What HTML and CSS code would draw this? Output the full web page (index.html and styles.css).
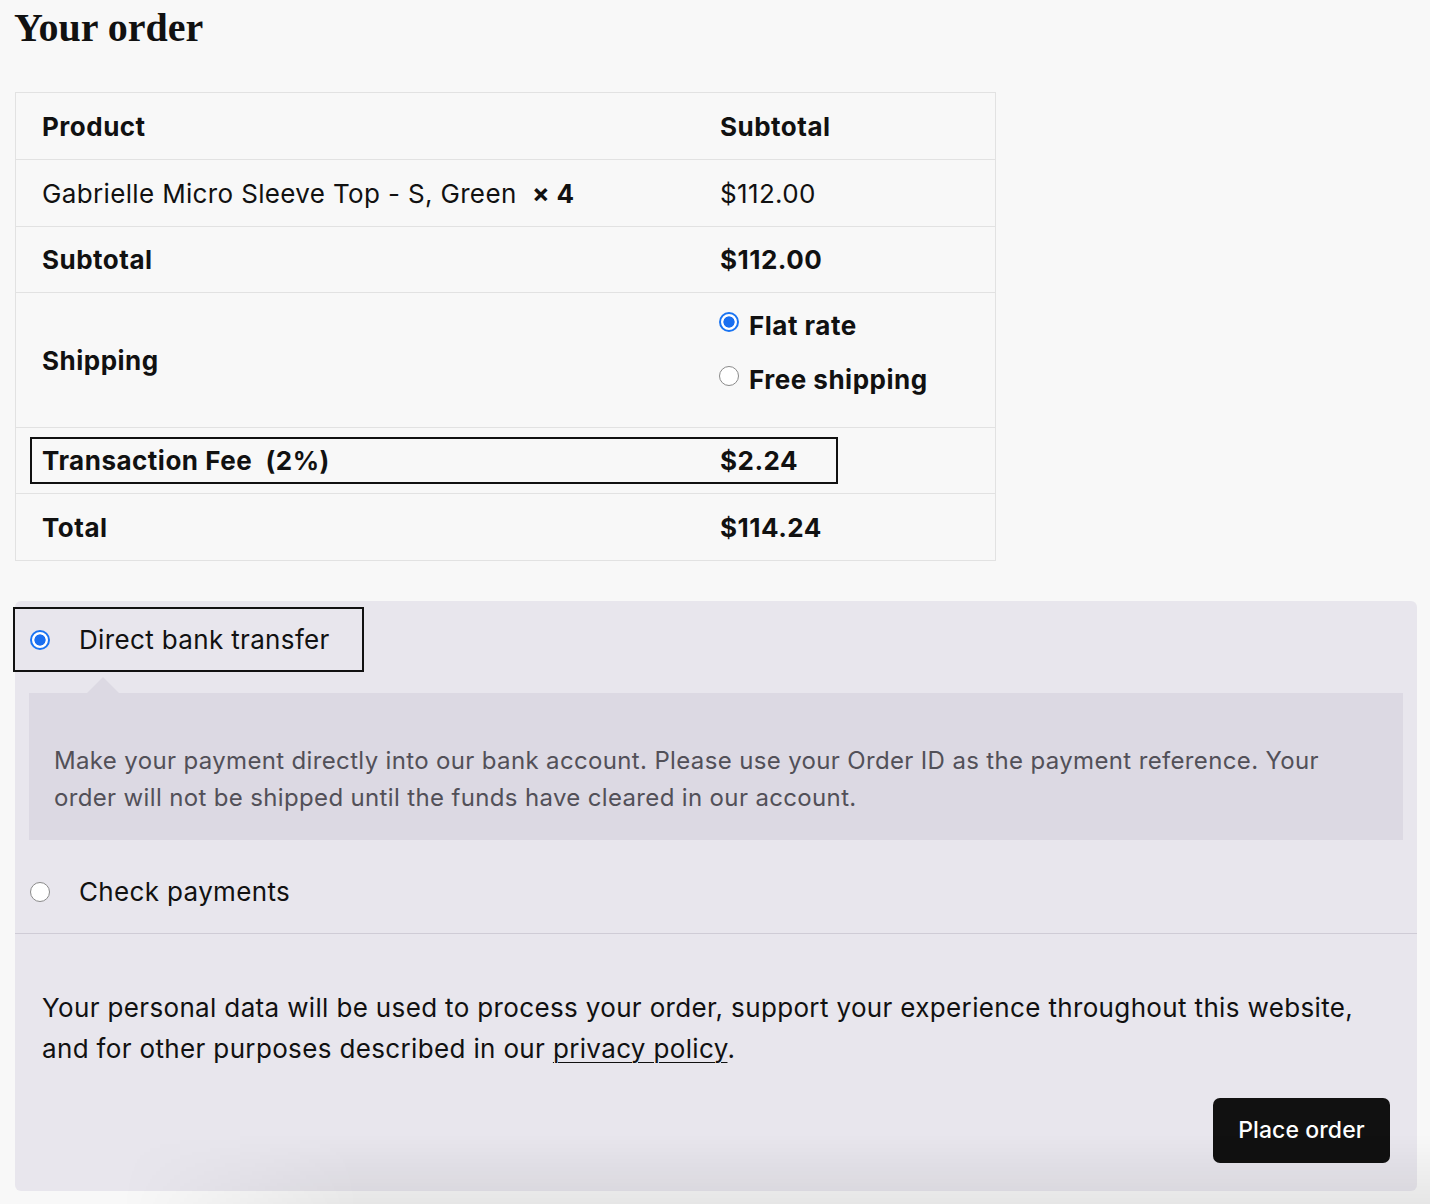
FILE: index.html
```html
<!DOCTYPE html>
<html lang="en">
<head>
<meta charset="utf-8">
<title>Your order</title>
<link rel="stylesheet" href="styles.css">
</head>
<body>
<main class="checkout">
  <h2 class="order-title">Your order</h2>

  <div class="order-table">
    <div class="row head">
      <div class="cell">Product</div>
      <div class="cell cell-right">Subtotal</div>
    </div>
    <div class="row">
      <div class="cell">Gabrielle Micro Sleeve Top - S, Green&nbsp; <strong class="qty">×&nbsp;4</strong></div>
      <div class="cell cell-right">$112.00</div>
    </div>
    <div class="row bold row-short">
      <div class="cell">Subtotal</div>
      <div class="cell cell-right">$112.00</div>
    </div>
    <div class="row bold shipping">
      <div class="cell">Shipping</div>
      <div class="cell cell-right ship-cell">
        <ul class="ship-list">
          <li class="ship-item"><span class="radio checked"></span><span>Flat rate</span></li>
          <li class="ship-item"><span class="radio"></span><span>Free shipping</span></li>
        </ul>
      </div>
    </div>
    <div class="row bold fee-row">
      <div class="fee-box">
        <div>Transaction Fee&nbsp; (2%)</div>
        <div>$2.24</div>
      </div>
    </div>
    <div class="row bold last">
      <div class="cell">Total</div>
      <div class="cell cell-right">$114.24</div>
    </div>
  </div>

  <section class="payment">
    <ul class="methods">
      <li class="method">
        <label class="method-label active"><span class="radio checked"></span><span>Direct bank transfer</span></label>
        <div class="method-desc">
          <p>Make your payment directly into our bank account. Please use your Order ID as the payment reference. Your order will not be shipped until the funds have cleared in our account.</p>
        </div>
      </li>
      <li class="method method-plain">
        <label class="method-label"><span class="radio"></span><span>Check payments</span></label>
      </li>
    </ul>
    <div class="place-order">
      <p class="privacy">Your personal data will be used to process your order, support your experience throughout this website, and for other purposes described in our <a href="#" class="privacy-link">privacy policy</a>.</p>
      <div class="actions">
        <button type="button" class="place-btn">Place order</button>
      </div>
    </div>
  </section>
</main>
<div class="bottom-fade"></div>
</body>
</html>
```

FILE: styles.css
```css
* { box-sizing: border-box; }

html, body {
  margin: 0;
  padding: 0;
  background: #f8f8f8;
}

body {
  font-family: Inter, "Noto Sans", "Liberation Sans", sans-serif;
  color: #111;
  font-size: 26px;
  line-height: 39px;
  letter-spacing: 0.35px;
}

.checkout {
  padding: 0 13px 0 15px;
}

.order-title {
  margin: 4px 0 0 -1px;
  font-family: "Liberation Serif", "DejaVu Serif", serif;
  font-weight: 700;
  font-size: 40px;
  line-height: 48px;
  letter-spacing: 0;
  color: #111;
}

.order-table {
  margin-top: 40px;
  width: 981px;
  border: 1px solid #e2e2e2;
  background: #f8f8f8;
}

.row {
  display: grid;
  grid-template-columns: 677px 1fr;
  align-items: center;
  min-height: 67px;
  border-bottom: 1px solid #e2e2e2;
}

.row.row-short { min-height: 66px; }
.row.last { border-bottom: none; min-height: 66px; }

.row.head, .row.bold { font-weight: 700; letter-spacing: 0.5px; }

.cell { padding: 0 0 0 26px; }
.cell-right { padding-left: 27px; }

.qty { font-weight: 700; }

.shipping { min-height: 135px; }

.ship-cell { align-self: start; }

.ship-list {
  list-style: none;
  margin: 0;
  padding: 13px 0 0;
}

.ship-item {
  display: flex;
  align-items: flex-start;
  margin-bottom: 15px;
}

.ship-item .radio {
  margin: 6px 10px 0 -1px;
}

.fee-row {
  display: block;
  min-height: 66px;
  padding: 9px 157px 8px 14px;
}

.fee-box {
  display: grid;
  grid-template-columns: 678px 1fr;
  border: 2px solid #111;
  padding: 2px 0 2px 10px;
}

.radio {
  display: inline-block;
  flex: none;
  width: 20px;
  height: 20px;
  border-radius: 50%;
  border: 1px solid #8a8a8a;
  background: #fff;
}

.radio.checked {
  border: 2px solid #1a74f2;
  background: radial-gradient(circle, #1a6ff0 0 5.3px, #fff 5.9px);
}

.payment {
  margin-top: 40px;
  width: 1402px;
  background: #e8e6ed;
  border-radius: 6px;
}

.methods {
  list-style: none;
  margin: 0;
  padding: 8px 0 0;
  border-bottom: 1px solid #cfccd6;
}

.method-label {
  display: inline-flex;
  align-items: center;
  font-weight: 400;
  padding-left: 15px;
}

.method-label .radio { margin-right: 29px; }

.method-label.active {
  width: 347px;
  height: 61px;
  outline: 2px solid #111;
}

.method-desc {
  position: relative;
  margin: 23px 14px 0;
  padding: 49px 40px 24px 25px;
  background: #dcd9e3;
  color: #525058;
  font-size: 24px;
  line-height: 37px;
  letter-spacing: 0.35px;
}

.method-desc::before {
  content: "";
  position: absolute;
  left: 58px;
  top: -32px;
  border: 16px solid transparent;
  border-bottom-color: #dcd9e3;
}

.method-desc p { margin: 0; }

.method-plain {
  padding: 32px 0 21px;
}

.place-order {
  padding: 53px 27px 28px;
}

.privacy {
  margin: 0;
  font-size: 26px;
  line-height: 41.5px;
  color: #111;
}

.privacy-link {
  color: #111;
  text-decoration: underline;
  text-underline-offset: 4px;
  text-decoration-thickness: 1px;
}

.actions {
  display: flex;
  justify-content: flex-end;
  margin-top: 28px;
}

.place-btn {
  width: 177px;
  height: 65px;
  padding: 0;
  border: none;
  border-radius: 7px;
  background: #111;
  color: #fff;
  font-family: Inter, "Noto Sans", sans-serif;
  font-size: 23px;
  font-weight: 500;
  letter-spacing: 0.1px;
}

.bottom-fade {
  position: fixed;
  left: 0;
  right: 0;
  bottom: 0;
  height: 70px;
  pointer-events: none;
  background: linear-gradient(to bottom, rgba(0,0,0,0), rgba(0,0,0,0.07));
  -webkit-mask-image: linear-gradient(to right, transparent 120px, #000 360px);
  mask-image: linear-gradient(to right, transparent 120px, #000 360px);
}
```
